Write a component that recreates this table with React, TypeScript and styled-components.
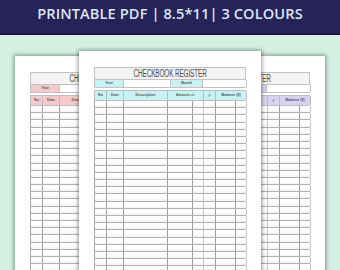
import styled, { createGlobalStyle } from 'styled-components';

const GlobalStyle = createGlobalStyle`
  html,
  body {
    margin: 0;
    padding: 0;
    background: #d3f0e2;
  }
`;

const COLUMNS = '12px 17px 44px 25px 11px 12px 20px 11px';
const ROW_COUNT = 26;

const Page = styled.div`
  display: flex;
  flex-direction: column;
  width: 340px;
  height: 270px;
  overflow: hidden;
  background: #d3f0e2;
  font-family: 'Liberation Sans', Arial, sans-serif;
`;

const Banner = styled.div`
  display: flex;
  align-items: center;
  justify-content: center;
  height: 33px;
  flex-shrink: 0;
  background: #252357;
  border-bottom: 2px solid #17153d;
`;

const BannerText = styled.span`
  font-family: 'Open Sans', 'Noto Sans', sans-serif;
  font-size: 14.6px;
  font-weight: 600;
  letter-spacing: 0.1px;
  line-height: 1;
  color: #dde7f1;
  margin-top: -6px;
`;

const Stage = styled.div`
  position: relative;
  flex: 1;
`;

const Sheet = styled.div<{ $x: number; $y: number; $z: number }>`
  position: absolute;
  left: ${(p) => p.$x}px;
  top: ${(p) => p.$y}px;
  z-index: ${(p) => p.$z};
  width: 182px;
  height: 240px;
  box-sizing: border-box;
  padding: 16px 15px 0 15px;
  background: #ffffff;
  box-shadow: 0 0 4px 1px rgba(0, 0, 0, 0.4);
  overflow: hidden;
`;

const TitleBox = styled.div`
  display: flex;
  align-items: center;
  justify-content: center;
  height: 13px;
  background: #f3f3f3;
  border: 1px solid #c2c2c2;
  box-sizing: border-box;
  overflow: hidden;
`;

const TitleText = styled.span`
  display: inline-block;
  font-size: 10px;
  line-height: 1;
  color: #4a4a4a;
  white-space: nowrap;
  transform: scaleX(0.64);
  letter-spacing: -0.2px;
`;

const InfoRow = styled.div`
  display: grid;
  grid-template-columns: 29px 47px 32px 44px;
  height: 8px;
  border-left: 1px solid #c2c2c2;
  border-bottom: 1px solid #c2c2c2;
  box-sizing: border-box;
  margin-bottom: 2px;
`;

const InfoCell = styled.div<{ $accent?: string }>`
  display: flex;
  align-items: center;
  justify-content: center;
  background: ${(p) => p.$accent || '#ffffff'};
  border-right: 1px solid #c2c2c2;
  font-size: 3.6px;
  line-height: 1;
  font-weight: 700;
  color: #555;
`;

const HeadRow = styled.div<{ $accent: string }>`
  display: grid;
  grid-template-columns: ${COLUMNS};
  height: 11px;
  background: ${(p) => p.$accent};
  border: 1px solid #bdbdbd;
  border-right: none;
  box-sizing: border-box;
`;

const HeadCell = styled.div<{ $span?: number }>`
  grid-column: span ${(p) => p.$span || 1};
  display: flex;
  align-items: center;
  justify-content: center;
  border-right: 1px solid #bdbdbd;
  font-size: 3.6px;
  line-height: 1;
  font-weight: 700;
  color: #555;
  white-space: nowrap;
`;

const Tick = styled.span`
  font-family: 'DejaVu Sans', sans-serif;
  font-size: 5px;
  font-weight: 400;
`;

const Row = styled.div`
  display: grid;
  grid-template-columns: ${COLUMNS};
  height: 7.2px;
  border-left: 1px solid #aaaaaa;
  border-bottom: 1px solid #b0b0b0;
  box-sizing: border-box;
`;

const Cell = styled.div<{ $light?: boolean }>`
  border-right: 1px solid ${(p) => (p.$light ? '#c4c4c4' : '#9e9e9e')};
  background: linear-gradient(#ffffff 55%, #f2f2f2);
`;

const LIGHT_COLUMNS = [4, 7];

const Register = ({ accent }: { accent: string }) => (
  <>
    <TitleBox>
      <TitleText>CHECKBOOK REGISTER</TitleText>
    </TitleBox>
    <InfoRow>
      <InfoCell $accent={accent}>Year</InfoCell>
      <InfoCell />
      <InfoCell $accent={accent}>Month</InfoCell>
      <InfoCell />
    </InfoRow>
    <HeadRow $accent={accent}>
      <HeadCell>No</HeadCell>
      <HeadCell>Date</HeadCell>
      <HeadCell>Description</HeadCell>
      <HeadCell $span={2}>Amount +/-</HeadCell>
      <HeadCell>
        <Tick>✓</Tick>
      </HeadCell>
      <HeadCell $span={2}>Balance ($)</HeadCell>
    </HeadRow>
    {Array.from({ length: ROW_COUNT }).map((_, r) => (
      <Row key={r}>
        {Array.from({ length: 8 }).map((__, c) => (
          <Cell key={c} $light={LIGHT_COLUMNS.includes(c)} />
        ))}
      </Row>
    ))}
  </>
);

const App = () => {
  return (
    <Page>
      <GlobalStyle />
      <Banner>
        <BannerText>PRINTABLE PDF | 8.5*11| 3 COLOURS</BannerText>
      </Banner>
      <Stage>
        <Sheet $x={15} $y={21} $z={1}>
          <Register accent="#f7c8ca" />
        </Sheet>
        <Sheet $x={143} $y={21} $z={1}>
          <Register accent="#d5d3ef" />
        </Sheet>
        <Sheet $x={79} $y={16} $z={2}>
          <Register accent="#c8f1f3" />
        </Sheet>
      </Stage>
    </Page>
  );
};

export default App;
